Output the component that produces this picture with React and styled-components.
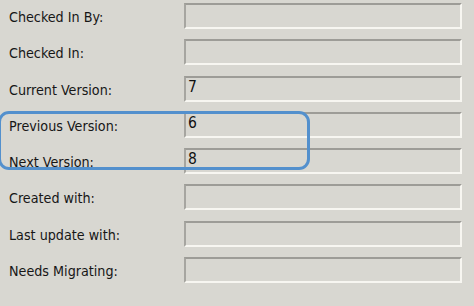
import React from "react";
import styled, { createGlobalStyle } from "styled-components";

const Global = createGlobalStyle`
  html, body { margin: 0; padding: 0; background: #d8d7d1; }
  body { width: 474px; height: 306px; overflow: hidden; }
`;

const Panel = styled.div`
  width: 474px;
  height: 306px;
  box-sizing: border-box;
  background: #d8d7d1;
  padding: 3px 0 0 9px;
  font-family: "DejaVu Sans Condensed", "DejaVu Sans", Tahoma, sans-serif;
  color: #1c1c1c;
`;

const Group = styled.div`
  position: relative;
  &::after {
    content: "";
    position: absolute;
    left: -11px;
    top: -1px;
    width: 312px;
    height: 59px;
    box-sizing: border-box;
    border: 3px solid #5390cd;
    border-radius: 11px;
    pointer-events: none;
  }
`;

const Row = styled.div`
  display: grid;
  grid-template-columns: 175px 278px;
  align-items: start;
  height: 36.3px;
`;

const Label = styled.div`
  height: 26px;
  line-height: 29px;
  font-size: 14.2px;
  white-space: nowrap;
  color: #161616;
`;

const Field = styled.div`
  height: 26px;
  box-sizing: border-box;
  border-top: 2px solid #9d9c97;
  border-left: 2px solid #a6a5a0;
  border-bottom: 2px solid #f7f6f1;
  border-right: 2px solid #f7f6f1;
  background: #d8d7d1;
  padding: 0 0 0 2px;
  font-size: 15.5px;
  line-height: 19px;
  color: #111;
`;

const rows = [
  ["Checked In By:", ""],
  ["Checked In:", ""],
  ["Current Version:", "7"],
];
const highlighted = [
  ["Previous Version:", "6"],
  ["Next Version:", "8"],
];
const rest = [
  ["Created with:", ""],
  ["Last update with:", ""],
  ["Needs Migrating:", ""],
];

const FieldRow = ({ label, value }) => (
  <Row>
    <Label>{label}</Label>
    <Field>{value}</Field>
  </Row>
);

export default function App() {
  return (
    <>
      <Global />
      <Panel>
        {rows.map(([l, v]) => (
          <FieldRow key={l} label={l} value={v} />
        ))}
        <Group>
          {highlighted.map(([l, v]) => (
            <FieldRow key={l} label={l} value={v} />
          ))}
        </Group>
        {rest.map(([l, v]) => (
          <FieldRow key={l} label={l} value={v} />
        ))}
      </Panel>
    </>
  );
}
